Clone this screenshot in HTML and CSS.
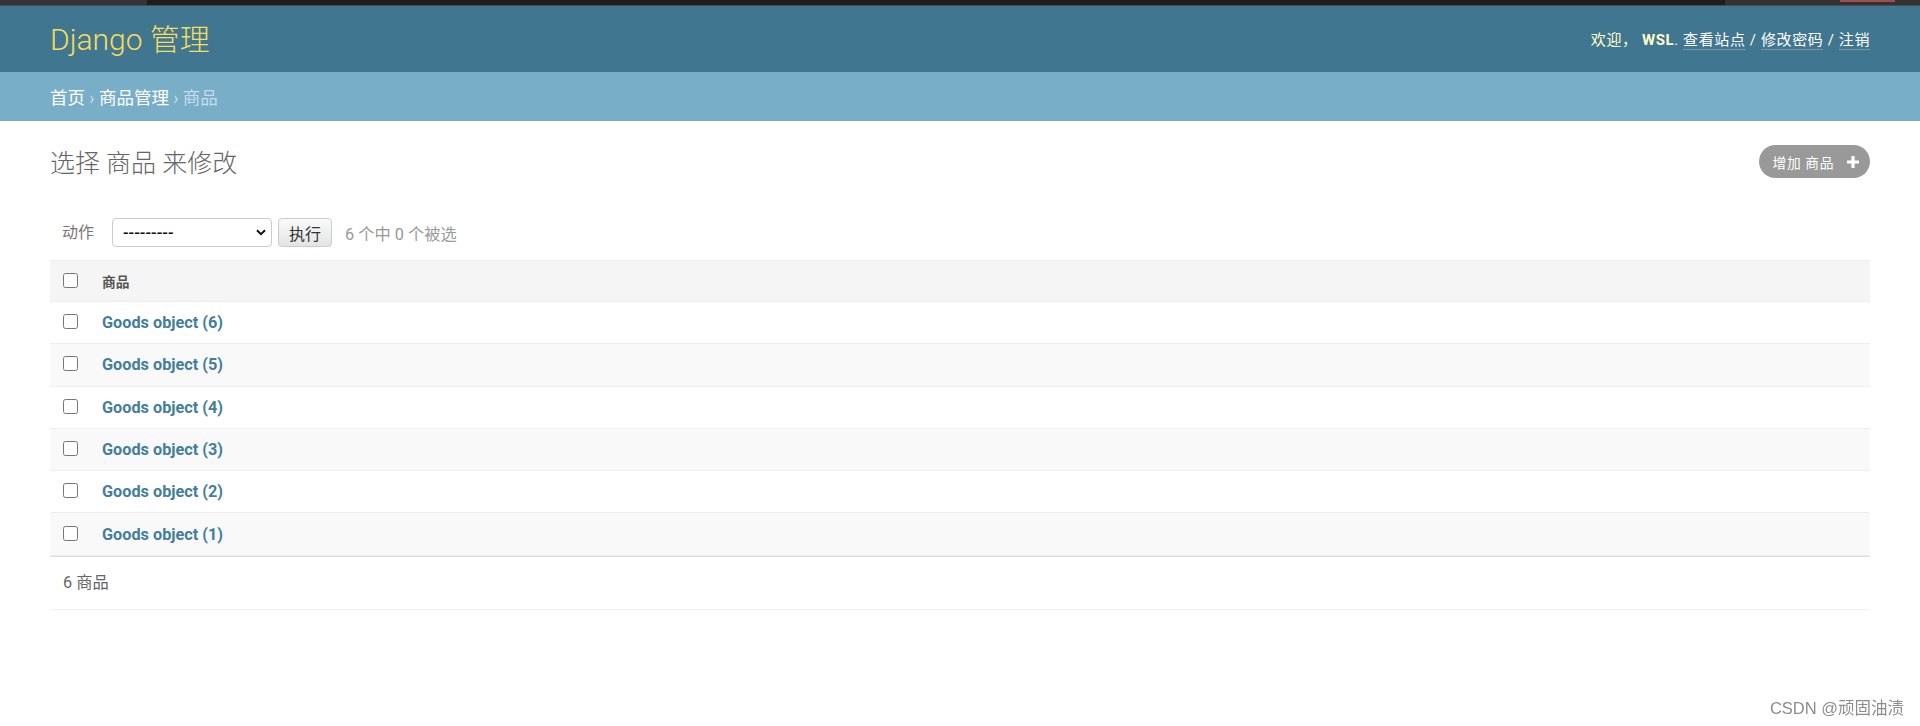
FILE: index.html
```html
<!DOCTYPE html>
<html lang="zh-CN">
<head>
<meta charset="utf-8">
<title>选择 商品 来修改 | Django 站点管理员</title>
<link rel="stylesheet" href="styles.css">
</head>
<body>
<div class="topstrip"><span class="ts-a"></span><span class="ts-b"></span><span class="ts-c"><span class="ts-red"></span></span></div>
<header class="header">
  <h1 class="branding">Django 管理</h1>
  <div class="user-tools">欢迎， <strong>WSL</strong>. <a href="#">查看站点</a> / <a href="#">修改密码</a> / <a href="#">注销</a></div>
</header>
<nav class="breadcrumbs"><a href="#">首页</a> › <a href="#">商品管理</a> › 商品</nav>
<main class="content">
  <div class="title-row">
    <h1 class="page-title">选择 商品 来修改</h1>
    <a class="addlink" href="#"><span>增加 商品</span><svg class="plus" width="12" height="12" viewBox="0 0 12 12"><path d="M4.4 0h3.2v4.4H12v3.2H7.6V12H4.4V7.6H0V4.4h4.4z" fill="#fff"/></svg></a>
  </div>
  <div class="actions">
    <label class="actions-label">动作</label>
    <span class="select-wrap">
      <select class="action-select"><option>---------</option></select>
      <svg class="chev" width="10" height="7" viewBox="0 0 10 7"><polyline points="1,1.2 5,5.2 9,1.2" fill="none" stroke="#111" stroke-width="2"/></svg>
    </span>
    <button class="go-btn" type="button">执行</button>
    <span class="counter">6 个中 0 个被选</span>
  </div>
  <div class="result-list">
    <div class="row head"><input type="checkbox"><span class="col-title">商品</span></div>
    <div class="row r1"><input type="checkbox"><a class="obj" href="#">Goods object (6)</a></div>
    <div class="row r2"><input type="checkbox"><a class="obj" href="#">Goods object (5)</a></div>
    <div class="row r1"><input type="checkbox"><a class="obj" href="#">Goods object (4)</a></div>
    <div class="row r2"><input type="checkbox"><a class="obj" href="#">Goods object (3)</a></div>
    <div class="row r1"><input type="checkbox"><a class="obj" href="#">Goods object (2)</a></div>
    <div class="row r2"><input type="checkbox"><a class="obj" href="#">Goods object (1)</a></div>
  </div>
  <p class="paginator">6 商品</p>
</main>
<div class="watermark">CSDN @顽固油渍</div>
</body>
</html>
```
FILE: styles.css
```css
* { box-sizing: border-box; }
html, body { margin: 0; padding: 0; background: #fff; }
body {
  font-family: Roboto, "Noto Sans CJK SC", sans-serif;
  color: #333;
  font-size: 16.25px;
}

.topstrip { display: flex; height: 6px; border-bottom: 1px solid #4b4b4f; }
.ts-a { width: 147px; background: #343438; }
.ts-b { flex: 1; background: #1e1e20; }
.ts-c { width: 195px; background: #333336; display: flex; padding-left: 115px; }
.ts-red { width: 55px; height: 2px; background: #9c4f4c; }

.header {
  height: 66px;
  background: #417690;
  display: flex;
  align-items: center;
  justify-content: space-between;
  padding: 0 50px;
}
.branding {
  margin: 2px 0 0;
  font-weight: 300;
  font-size: 30px;
  line-height: 36px;
  color: #f5dd5d;
}
.user-tools {
  font-size: 15px;
  letter-spacing: 0.6px;
  color: #ffc;
  line-height: 20px;
  margin-top: 2px;
}
.user-tools strong { font-weight: 700; }
.user-tools a {
  color: #fff;
  text-decoration: none;
  border-bottom: 1px solid rgba(255, 255, 255, 0.25);
}

.breadcrumbs {
  height: 49px;
  line-height: 45px;
  padding: 4px 50px 0;
  background: #79aec8;
  color: #c4dce8;
  font-size: 17.5px;
}
.breadcrumbs a { color: #fff; text-decoration: none; }

.content { padding: 25px 50px 0; }
.title-row {
  display: flex;
  justify-content: space-between;
  align-items: flex-start;
}
.page-title {
  margin: 0 0 25px;
  font-size: 25px;
  font-weight: 300;
  line-height: 35px;
  color: #666;
}
.addlink {
  margin-top: -1px;
  display: flex;
  align-items: center;
  height: 33px;
  padding: 0 11px 0 14px;
  border-radius: 17px;
  background: #999;
  color: #fff;
  font-size: 13.75px;
  letter-spacing: 0.6px;
  text-decoration: none;
  gap: 13px;
}
.plus { display: block; }

.actions {
  display: flex;
  align-items: center;
  padding: 12px 12px 13px;
}
.actions-label { font-size: 16px; color: #777; margin-right: 18px; line-height: 29px; }
.select-wrap { position: relative; display: block; height: 29px; }
.action-select {
  appearance: none;
  -webkit-appearance: none;
  display: block;
  width: 160px;
  height: 29px;
  border: 1px solid #ccc;
  border-radius: 4px;
  padding: 0 10px;
  background: #fff;
  font-family: Roboto, "Noto Sans CJK SC", sans-serif;
  font-size: 16.5px;
  font-weight: 500;
  color: #111;
}
.chev { position: absolute; right: 6px; top: 11px; }
.go-btn {
  margin-left: 6px;
  height: 29px;
  padding: 0 10px;
  border: 1px solid #ccc;
  border-radius: 4px;
  background: linear-gradient(#fafafa, #e4e4e4);
  font-family: Roboto, "Noto Sans CJK SC", sans-serif;
  font-size: 16px;
  color: #333;
}
.counter { margin-left: 13px; color: #999; font-size: 16.25px; }

.result-list { border-top: 1px solid #eee; }
.row {
  display: flex;
  align-items: center;
  height: 42.3px;
  padding-left: 13px;
  gap: 24px;
  border-bottom: 1px solid #eee;
}
.row input[type="checkbox"] { width: 15px; height: 15px; margin: 0 0 2px; }
.head { height: 41px; background: #f5f5f5; }
.r1 { background: #fff; }
.r2 { background: #f9f9f9; }
.col-title { font-weight: 700; color: #555; font-size: 13.75px; }
.obj { font-weight: 700; color: #447e9b; text-decoration: none; font-size: 16.25px; }

.paginator {
  margin: 0;
  border-top: 1px solid #ddd;
  border-bottom: 1px solid #eee;
  padding: 12px 13px;
  line-height: 28px;
  font-size: 16.25px;
  color: #666;
}

.watermark {
  position: fixed;
  right: 16px;
  bottom: 8px;
  font-family: "Liberation Sans", "Noto Sans CJK SC", sans-serif;
  font-size: 16.5px;
  line-height: 20px;
  color: #8c8c8c;
}
```
